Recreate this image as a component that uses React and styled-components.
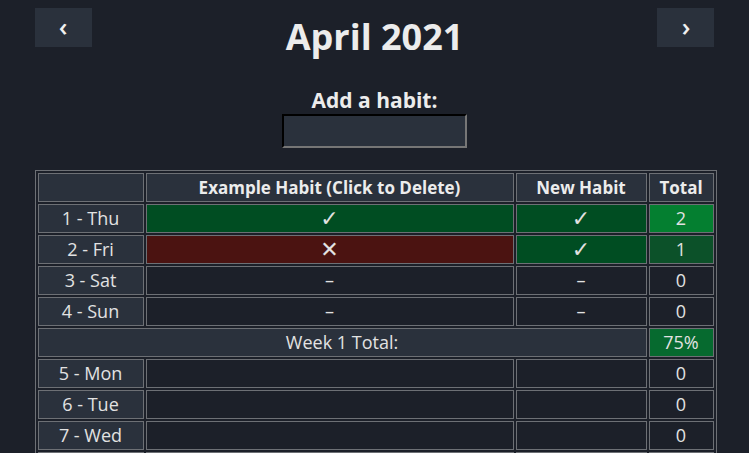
import { createGlobalStyle } from "styled-components";
import styled from "styled-components";

const GlobalStyle = createGlobalStyle`
    body {
        margin: 8px;
        background: #1c2029;
        color: #e6e6e6;
        font-family: "Open Sans", "Noto Sans", sans-serif;
    }
`;

const Page = styled.div`
    width: 680px;
    margin: 0 auto;
`;

const Header = styled.div`
    display: flex;
    justify-content: space-between;
    align-items: flex-start;
`;

const NavButton = styled.button`
    width: 57px;
    height: 39px;
    border: none;
    background: #2a313c;
    color: #f0f0f0;
    font-family: inherit;
    font-size: 26px;
    font-weight: 600;
    line-height: 1;
    padding: 0 0 4px;
    cursor: pointer;
`;

const Title = styled.h1`
    margin: 8px 0 0;
    font-size: 36px;
    line-height: 42px;
    font-weight: 700;
    color: #ececec;
`;

const AddForm = styled.div`
    display: flex;
    flex-direction: column;
    align-items: center;
    margin-top: 30px;
`;

const AddLabel = styled.label`
    font-size: 21px;
    font-weight: 700;
    line-height: 24px;
    color: #ececec;
`;

const HabitInput = styled.input`
    box-sizing: border-box;
    width: 185px;
    height: 34px;
    margin-top: 2px;
    background: #2a313c;
    color: #e6e6e6;
    border: 2px inset #767676;
    border-top-color: #111;
    border-left-color: #111;
    font-family: inherit;
    font-size: 16px;
`;

const Table = styled.table`
    margin-top: 22px;
    width: 680px;
    border: 1px solid #6d7075;
    border-collapse: separate;
    border-spacing: 2px;
    table-layout: fixed;
`;

const Cell = styled.td`
    box-sizing: border-box;
    height: 29px;
    padding: 0;
    border: 1px solid #6d7075;
    text-align: center;
    font-size: 18px;
    line-height: 25px;
    color: #e2e2e2;
    background: ${(props) => props.bg || "#1c2029"};
    cursor: ${(props) => (props.clickable ? "pointer" : "default")};
`;

const Mark = styled.span`
    display: inline-block;
    font-family: "DejaVu Sans", sans-serif;
    font-size: 22px;
    line-height: 25px;
    vertical-align: top;
`;

const HeadCell = styled.th`
    box-sizing: border-box;
    height: 29px;
    padding: 0;
    border: 1px solid #6d7075;
    background: #2a313c;
    font-size: 17px;
    font-weight: 700;
    line-height: 25px;
    color: #ececec;
    width: ${(props) => props.w}px;
`;

const DayCell = styled(Cell)`
    background: #2a313c;
`;

const habits = [
    { name: "Example Habit (Click to Delete)", w: 368, marks: { 1: "done", 2: "missed" } },
    { name: "New Habit", w: 131, marks: { 1: "done", 2: "done" } },
];

const dayNames = ["Sun", "Mon", "Tue", "Wed", "Thu", "Fri", "Sat"];

const markCell = (mark, day) => {
    if (mark === "done") return { bg: "#004d22", text: <Mark>✓</Mark> };
    if (mark === "missed") return { bg: "#4b1311", text: <Mark>✕</Mark> };
    if (day <= 4) return { bg: null, text: "–" };
    return { bg: null, text: "" };
};

const totalColor = (n) => {
    if (n >= 2) return "#047f30";
    if (n === 1) return "#0c5129";
    return null;
};

const App = () => {
    const rows = [];
    let weekDone = 0;
    let weekCount = 0;
    let week = 1;

    for (let day = 1; day <= 30; day++) {
        const dow = new Date(2021, 3, day).getDay();
        let done = 0;
        const cells = habits.map((h) => {
            const m = markCell(h.marks[day], day);
            if (h.marks[day] === "done") done++;
            if (h.marks[day]) weekCount++;
            return (
                <Cell key={h.name} bg={m.bg} clickable>
                    {m.text}
                </Cell>
            );
        });
        weekDone += done;

        rows.push(
            <tr key={day}>
                <DayCell>
                    {day} - {dayNames[dow]}
                </DayCell>
                {cells}
                <Cell bg={totalColor(done)}>{done}</Cell>
            </tr>
        );

        if (dow === 0) {
            const pct = weekCount ? Math.round((weekDone / weekCount) * 100) : 0;
            rows.push(
                <tr key={"w" + week}>
                    <DayCell colSpan={3}>Week {week} Total:</DayCell>
                    <Cell bg={pct ? "#066a2f" : null}>{pct}%</Cell>
                </tr>
            );
            week++;
            weekDone = 0;
            weekCount = 0;
        }
    }

    return (
        <>
            <GlobalStyle />
            <Page>
                <Header>
                    <NavButton>‹</NavButton>
                    <Title>April 2021</Title>
                    <NavButton>›</NavButton>
                </Header>
                <AddForm>
                    <AddLabel htmlFor="habit">Add a habit:</AddLabel>
                    <HabitInput id="habit" type="text" />
                </AddForm>
                <Table>
                    <thead>
                        <tr>
                            <HeadCell w={106}></HeadCell>
                            {habits.map((h) => (
                                <HeadCell key={h.name} w={h.w}>
                                    {h.name}
                                </HeadCell>
                            ))}
                            <HeadCell w={65}>Total</HeadCell>
                        </tr>
                    </thead>
                    <tbody>{rows}</tbody>
                </Table>
            </Page>
        </>
    );
};

export default App;
